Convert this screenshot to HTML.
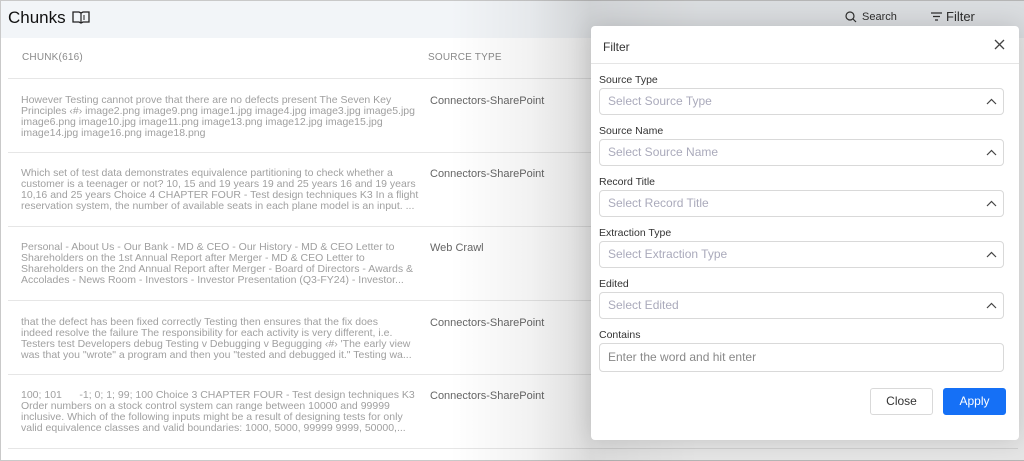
<!DOCTYPE html>
<html><head><meta charset="utf-8"><style>
*{box-sizing:border-box;margin:0;padding:0}
body{width:1024px;height:461px;overflow:hidden;background:#fff;font-family:"Liberation Sans",Arial,sans-serif;position:relative}
.frame{position:absolute;left:0;top:0;width:1024px;height:461px;border:1px solid #c9c9c9;border-right:none}
.hdr{position:absolute;left:1px;top:1px;width:1023px;height:37px;background:#f2f5f8}
.title{position:absolute;left:8px;top:8px;font-size:17px;color:#111}
.book{position:absolute;left:72px;top:10px}
.srch{position:absolute;top:11px;font-size:11px;color:#333}
.filt{position:absolute;top:9px;font-size:13px;color:#333}
.th{position:absolute;top:52px;font-size:10px;color:#8a8a8a;letter-spacing:.2px}
.sep{position:absolute;left:8px;width:1010px;height:1px;background:#e6e6e6}
.cell{position:absolute;left:21px;white-space:nowrap;font-size:10.5px;line-height:11px;color:#a0a0a0}
.src{position:absolute;left:430px;font-size:11px;color:#666}
.shade{position:absolute;left:0;top:0;width:1024px;height:461px;background:linear-gradient(90deg,rgba(0,0,0,0) 0,rgba(0,0,0,0) 450px,rgba(0,0,0,.05) 530px,rgba(0,0,0,.14) 590px,rgba(0,0,0,.1) 700px,rgba(0,0,0,.1) 1024px)}
.modal{position:absolute;left:591px;top:26px;width:428px;height:414px;background:#fff;border-radius:4px;box-shadow:0 0 24px rgba(0,0,0,.15)}
.mh{height:38px;border-bottom:1px solid #e5e5e5;padding:14px 12px;font-size:12px;color:#333}
.x{position:absolute;right:14px;top:13px}
.lbl{position:absolute;left:8px;font-size:10.5px;color:#333}
.inp{position:absolute;left:8px;width:405px;height:27px;border:1px solid #d9d9d9;border-radius:4px;padding:0 8px;line-height:25px;font-size:12px;color:#aab}
.inp svg{position:absolute;right:6px;top:9px}
.btn{position:absolute;top:362px;height:27px;border-radius:3px;font-size:12px;text-align:center;line-height:25px}
</style></head><body>
<div class="hdr"></div>
<div class="frame"></div>
<div class="title">Chunks</div>
<svg class="book" width="18" height="14" viewBox="0 0 18 14"><path d="M1 2h6l2 1 2-1h6v10h-6l-2 1-2-1H1z" fill="none" stroke="#222" stroke-width="1.3"/><path d="M9 3v10" stroke="#222" stroke-width="1.2"/><path d="M12 5v5" stroke="#222" stroke-width="1"/></svg>
<svg style="position:absolute;left:845px;top:11px" width="12" height="12"><circle cx="5" cy="5" r="4" fill="none" stroke="#333" stroke-width="1.2"/><path d="M8 8l3 3" stroke="#333" stroke-width="1.2"/></svg>
<div class="srch" style="left:862px">Search</div>
<svg style="position:absolute;left:931px;top:12px" width="11" height="9"><path d="M0 1h11M2 4.5h7M4 8h3" stroke="#333" stroke-width="1.2"/></svg>
<div class="filt" style="left:946px">Filter</div>
<div class="th" style="left:22px">CHUNK(616)</div>
<div class="th" style="left:428px">SOURCE TYPE</div>
<div class="sep" style="top:78px"></div>
<div class="cell" style="top:95px">However Testing cannot prove that there are no defects present The Seven Key<br>Principles ‹#› image2.png image9.png image1.jpg image4.jpg image3.jpg image5.jpg<br>image6.png image10.jpg image11.png image13.png image12.jpg image15.jpg<br>image14.jpg image16.png image18.png</div>
<div class="src" style="top:95px">Connectors-SharePoint</div>
<div class="sep" style="top:152px"></div>
<div class="cell" style="top:168px">Which set of test data demonstrates equivalence partitioning to check whether a<br>customer is a teenager or not? 10, 15 and 19 years 19 and 25 years 16 and 19 years<br>10,16 and 25 years Choice 4 CHAPTER FOUR - Test design techniques K3 In a flight<br>reservation system, the number of available seats in each plane model is an input. ...</div>
<div class="src" style="top:168px">Connectors-SharePoint</div>
<div class="sep" style="top:226px"></div>
<div class="cell" style="top:242px">Personal - About Us - Our Bank - MD &amp; CEO - Our History - MD &amp; CEO Letter to<br>Shareholders on the 1st Annual Report after Merger - MD &amp; CEO Letter to<br>Shareholders on the 2nd Annual Report after Merger - Board of Directors - Awards &amp;<br>Accolades - News Room - Investors - Investor Presentation (Q3-FY24) - Investor...</div>
<div class="src" style="top:242px">Web Crawl</div>
<div class="sep" style="top:300px"></div>
<div class="cell" style="top:317px">that the defect has been fixed correctly Testing then ensures that the fix does<br>indeed resolve the failure The responsibility for each activity is very different, i.e.<br>Testers test Developers debug Testing v Debugging v Begugging ‹#› 'The early view<br>was that you "wrote" a program and then you "tested and debugged it." Testing wa...</div>
<div class="src" style="top:317px">Connectors-SharePoint</div>
<div class="sep" style="top:374px"></div>
<div class="cell" style="top:390px">100; 101 &nbsp;&nbsp;&nbsp;&nbsp; -1; 0; 1; 99; 100 Choice 3 CHAPTER FOUR - Test design techniques K3<br>Order numbers on a stock control system can range between 10000 and 99999<br>inclusive. Which of the following inputs might be a result of designing tests for only<br>valid equivalence classes and valid boundaries: 1000, 5000, 99999 9999, 50000,...</div>
<div class="src" style="top:390px">Connectors-SharePoint</div>
<div class="sep" style="top:448px"></div>
<div class="shade"></div>
<div class="modal">
<div class="mh">Filter</div>
<svg class="x" width="11" height="11"><path d="M1 1l9 9M10 1l-9 9" stroke="#444" stroke-width="1.3"/></svg>
<div class="lbl" style="top:48px">Source Type</div>
<div class="inp" style="top:62px">Select Source Type<svg width="11" height="7"><path d="M1 6l4.5-4.5L10 6" fill="none" stroke="#444" stroke-width="1.2"/></svg></div>
<div class="lbl" style="top:99px">Source Name</div>
<div class="inp" style="top:113px">Select Source Name<svg width="11" height="7"><path d="M1 6l4.5-4.5L10 6" fill="none" stroke="#444" stroke-width="1.2"/></svg></div>
<div class="lbl" style="top:150px">Record Title</div>
<div class="inp" style="top:164px">Select Record Title<svg width="11" height="7"><path d="M1 6l4.5-4.5L10 6" fill="none" stroke="#444" stroke-width="1.2"/></svg></div>
<div class="lbl" style="top:201px">Extraction Type</div>
<div class="inp" style="top:215px">Select Extraction Type<svg width="11" height="7"><path d="M1 6l4.5-4.5L10 6" fill="none" stroke="#444" stroke-width="1.2"/></svg></div>
<div class="lbl" style="top:252px">Edited</div>
<div class="inp" style="top:266px">Select Edited<svg width="11" height="7"><path d="M1 6l4.5-4.5L10 6" fill="none" stroke="#444" stroke-width="1.2"/></svg></div>
<div class="lbl" style="top:303px">Contains</div>
<div class="inp" style="top:317px;height:29px;line-height:27px;color:#888">Enter the word and hit enter</div>
<div class="btn" style="left:279px;width:63px;border:1px solid #d9d9d9;color:#333">Close</div>
<div class="btn" style="left:352px;width:63px;background:#1570f6;color:#fff;border:1px solid #1570f6">Apply</div>
</div>
</body></html>
